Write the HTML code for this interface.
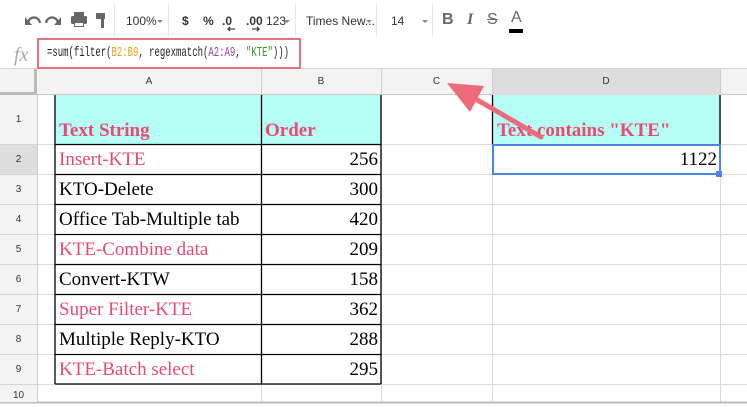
<!DOCTYPE html>
<html><head><meta charset="utf-8"><style>
body{margin:0;width:747px;height:404px;overflow:hidden;background:#fff;position:relative;font-family:"Liberation Sans",sans-serif}
.a{position:absolute}
.tb{color:#333;font-size:12px;line-height:14px}
.dd{position:absolute;width:0;height:0;border-left:3px solid transparent;border-right:3px solid transparent;border-top:3px solid #888}
.cell{position:absolute;font-family:"Liberation Serif",serif;font-size:19px;line-height:30px;box-sizing:border-box}
.pk{color:#e84a72}
.rh{position:absolute;left:0;width:37px;text-align:center;font-size:10px;color:#333;background:#f3f3f3;box-sizing:border-box;border-bottom:1px solid #d4d4d4}
</style></head><body>
<div class="a" style="left:0;top:0;width:747px;height:38px;background:#fff"></div>
<svg class="a" style="left:0;top:0" width="120" height="40">
<g fill="none" stroke="#666" stroke-width="2.2">
<path d="M28 24 A6 6 0 0 1 40 23"/>
<path d="M58 24 A6 6 0 0 0 46 23"/>
</g>
<polygon points="25,17 25,25 32,25" fill="#666"/>
<polygon points="61,17 61,25 54,25" fill="#666"/>
<rect x="74" y="12" width="10" height="4" fill="#666"/>
<rect x="71" y="16" width="16" height="8" rx="1.5" fill="#666"/>
<rect x="74" y="22" width="10" height="5" fill="#666"/>
<rect x="75" y="23" width="8" height="3" fill="#fff"/>
<rect x="96" y="13" width="9" height="6" fill="#666"/>
<rect x="101" y="19" width="3" height="9" fill="#666"/>
</svg>
<div class="a" style="left:114px;top:3px;width:1px;height:34px;background:#e6e6e6"></div>
<div class="a tb" style="left:126px;top:14px">100%</div>
<div class="dd" style="left:157px;top:20px"></div>
<div class="a" style="left:168px;top:3px;width:1px;height:34px;background:#e6e6e6"></div>
<div class="a tb" style="left:182px;top:14px;font-weight:bold">$</div>
<div class="a tb" style="left:203px;top:14px;font-weight:bold">%</div>
<div class="a tb" style="left:222px;top:14px;font-weight:bold">.0</div>
<svg class="a" style="left:226px;top:26px" width="10" height="6"><path d="M9 3H2M4 1L2 3L4 5" stroke="#444" stroke-width="1.3" fill="none"/></svg>
<div class="a tb" style="left:246px;top:14px;font-weight:bold">.00</div>
<svg class="a" style="left:251px;top:26px" width="10" height="6"><path d="M1 3H8M6 1L8 3L6 5" stroke="#444" stroke-width="1.3" fill="none"/></svg>
<div class="a tb" style="left:266px;top:14px">123</div>
<div class="dd" style="left:284px;top:20px"></div>
<div class="a" style="left:295px;top:3px;width:1px;height:34px;background:#e6e6e6"></div>
<div class="a tb" style="left:306px;top:14px">Times New...</div>
<div class="dd" style="left:366px;top:20px"></div>
<div class="a" style="left:376px;top:3px;width:1px;height:34px;background:#e6e6e6"></div>
<div class="a tb" style="left:391px;top:14px">14</div>
<div class="dd" style="left:422px;top:20px"></div>
<div class="a" style="left:432px;top:3px;width:1px;height:34px;background:#e6e6e6"></div>
<div class="a" style="left:442px;top:11px;font-size:16px;font-weight:bold;color:#666">B</div>
<div class="a" style="left:467px;top:11px;font-size:16px;font-style:italic;font-family:'Liberation Serif',serif;font-weight:bold;color:#666">I</div>
<div class="a" style="left:487px;top:11px;font-size:16px;text-decoration:line-through;color:#666">S</div>
<div class="a" style="left:511px;top:9px;font-size:16px;color:#666">A</div>
<div class="a" style="left:509px;top:29px;width:14px;height:4px;background:#000"></div>
<div class="a" style="left:0;top:38px;width:747px;height:31px;background:#fff;border-bottom:1px solid #d4d4d4;box-sizing:border-box"></div>
<div class="a" style="left:14px;top:44px;font-family:'Liberation Serif',serif;font-style:italic;font-size:20px;color:#aaa">fx</div>
<div class="a" style="left:37px;top:38px;width:264px;height:31px;border:2px solid #e8707f;box-sizing:border-box"></div>
<div class="a" style="left:47px;top:45px;font-family:'Liberation Mono',monospace;font-size:14px;line-height:16px;color:#222;transform:scaleX(0.64);transform-origin:0 0;white-space:nowrap">=sum(filter(<span style="color:#f39c12">B2:B9</span>, regexmatch(<span style="color:#8e44ad">A2:A9</span>, <span style="color:#2e9a2e">"KTE"</span>)))</div>
<div class="a" style="left:0;top:69px;width:747px;height:26px;background:#f3f3f3;border-bottom:1px solid #c8c8c8;box-sizing:border-box"></div>
<div class="a" style="left:0;top:69px;width:37px;height:26px;border-right:3px solid #bbb;border-bottom:3px solid #bbb;box-sizing:border-box"></div>
<div class="a" style="left:492px;top:69px;width:228px;height:26px;background:#ddd"></div>
<div class="a" style="left:37px;top:69px;width:224px;height:26px;line-height:26px;text-align:center;font-size:10px;color:#333;border-right:1px solid #ccc">A</div>
<div class="a" style="left:261px;top:69px;width:120px;height:26px;line-height:26px;text-align:center;font-size:10px;color:#333;border-right:1px solid #ccc">B</div>
<div class="a" style="left:381px;top:69px;width:111px;height:26px;line-height:26px;text-align:center;font-size:10px;color:#333;border-right:1px solid #ccc">C</div>
<div class="a" style="left:492px;top:69px;width:228px;height:26px;line-height:26px;text-align:center;font-size:10px;color:#333;border-right:1px solid #ccc">D</div>
<svg class="a" style="left:0;top:0" width="747" height="404">
<g stroke="#dadada" stroke-width="1">
<line x1="37" y1="144.5" x2="747" y2="144.5"/><line x1="37" y1="174.5" x2="747" y2="174.5"/>
<line x1="37" y1="204.5" x2="747" y2="204.5"/><line x1="37" y1="234.5" x2="747" y2="234.5"/>
<line x1="37" y1="264.5" x2="747" y2="264.5"/><line x1="37" y1="294.5" x2="747" y2="294.5"/>
<line x1="37" y1="324.5" x2="747" y2="324.5"/><line x1="37" y1="354.5" x2="747" y2="354.5"/>
<line x1="37" y1="384.5" x2="747" y2="384.5"/>
<line x1="261.5" y1="95" x2="261.5" y2="402"/><line x1="381.5" y1="95" x2="381.5" y2="402"/>
<line x1="492.5" y1="95" x2="492.5" y2="402"/><line x1="720.5" y1="95" x2="720.5" y2="402"/>
</g>
<rect x="55" y="95" width="326" height="49" fill="#b5fdf5"/>
<rect x="492" y="95" width="228" height="49" fill="#b5fdf5"/>
<g stroke="#000" stroke-width="1.3" fill="none">
<line x1="55" y1="95" x2="55" y2="384"/><line x1="261.5" y1="95" x2="261.5" y2="384"/><line x1="381" y1="95" x2="381" y2="384"/>
<line x1="55" y1="144.5" x2="381" y2="144.5"/><line x1="55" y1="174.5" x2="381" y2="174.5"/>
<line x1="55" y1="204.5" x2="381" y2="204.5"/><line x1="55" y1="234.5" x2="381" y2="234.5"/>
<line x1="55" y1="264.5" x2="381" y2="264.5"/><line x1="55" y1="294.5" x2="381" y2="294.5"/>
<line x1="55" y1="324.5" x2="381" y2="324.5"/><line x1="55" y1="354.5" x2="381" y2="354.5"/>
<line x1="55" y1="384" x2="381" y2="384"/>
<line x1="492.5" y1="95" x2="492.5" y2="144"/><line x1="720" y1="95" x2="720" y2="144"/>
</g>
<rect x="493" y="145" width="227" height="29" fill="none" stroke="#4a86e8" stroke-width="2"/>
<rect x="716" y="171" width="6" height="6" fill="#4a86e8"/>
<line x1="0" y1="402.5" x2="747" y2="402.5" stroke="#bbb" stroke-width="2"/>
</svg>
<div class="a" style="left:0;top:95px;width:37px;height:307px;background:#f3f3f3;border-right:1px solid #ccc"></div>
<div class="rh" style="top:95px;height:50px;padding-top:19px">1</div>
<div class="rh" style="top:145px;height:30px;line-height:30px;background:#ddd">2</div>
<div class="rh" style="top:175px;height:30px;line-height:30px">3</div>
<div class="rh" style="top:205px;height:30px;line-height:30px">4</div>
<div class="rh" style="top:235px;height:30px;line-height:30px">5</div>
<div class="rh" style="top:265px;height:30px;line-height:30px">6</div>
<div class="rh" style="top:295px;height:30px;line-height:30px">7</div>
<div class="rh" style="top:325px;height:30px;line-height:30px">8</div>
<div class="rh" style="top:355px;height:30px;line-height:30px">9</div>
<div class="rh" style="top:385px;height:17px;line-height:22px;border:none">10</div>
<div class="cell pk" style="left:59px;top:116px;font-weight:bold">Text String</div>
<div class="cell pk" style="left:265px;top:116px;font-weight:bold">Order</div>
<div class="cell pk" style="left:497px;top:116px;font-weight:bold">Text contains "KTE"</div>
<div class="cell" style="left:493px;top:145px;width:224px;text-align:right">1122</div>
<div class="cell pk" style="left:59px;top:145px">Insert-KTE</div>
<div class="cell" style="left:59px;top:175px">KTO-Delete</div>
<div class="cell" style="left:59px;top:205px">Office Tab-Multiple tab</div>
<div class="cell pk" style="left:59px;top:235px">KTE-Combine data</div>
<div class="cell" style="left:59px;top:265px">Convert-KTW</div>
<div class="cell pk" style="left:59px;top:295px">Super Filter-KTE</div>
<div class="cell" style="left:59px;top:325px">Multiple Reply-KTO</div>
<div class="cell pk" style="left:59px;top:355px">KTE-Batch select</div>
<div class="cell" style="left:262px;top:145px;width:116px;text-align:right">256</div>
<div class="cell" style="left:262px;top:175px;width:116px;text-align:right">300</div>
<div class="cell" style="left:262px;top:205px;width:116px;text-align:right">420</div>
<div class="cell" style="left:262px;top:235px;width:116px;text-align:right">209</div>
<div class="cell" style="left:262px;top:265px;width:116px;text-align:right">158</div>
<div class="cell" style="left:262px;top:295px;width:116px;text-align:right">362</div>
<div class="cell" style="left:262px;top:325px;width:116px;text-align:right">288</div>
<div class="cell" style="left:262px;top:355px;width:116px;text-align:right">295</div>
<svg class="a" style="left:0;top:0" width="747" height="404">
<line x1="541" y1="137" x2="462" y2="91" stroke="#ec6a7a" stroke-width="5" stroke-linecap="round"/>
<polygon points="447,83 484,86 470,112" fill="#ec6a7a"/>
</svg>
</body></html>
